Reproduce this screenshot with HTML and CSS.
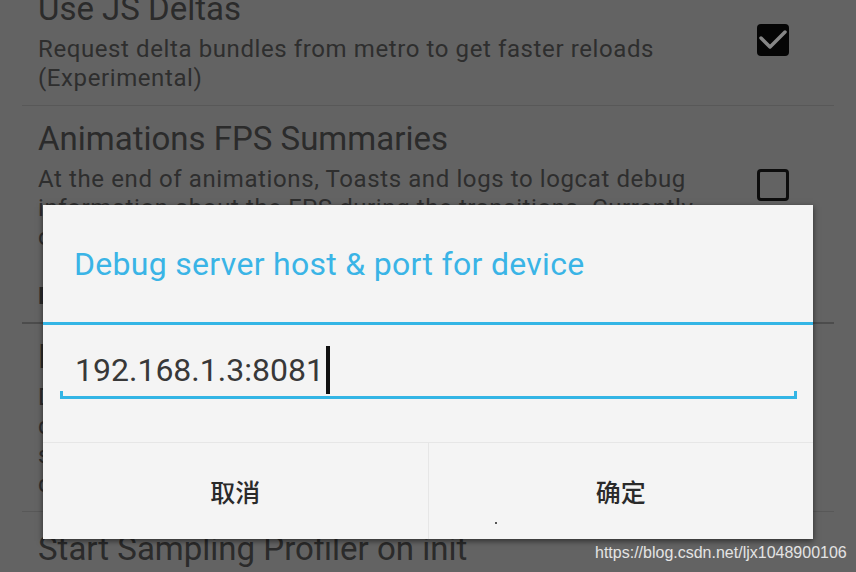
FILE: index.html
```html
<!DOCTYPE html>
<html lang="zh-CN">
<head>
<meta charset="utf-8">
<title>Dev Settings</title>
<link rel="stylesheet" href="styles.css">
</head>
<body>
<main class="prefs">
  <section class="pref">
    <div class="pref-text">
      <div class="pref-title">Use JS Deltas</div>
      <div class="pref-summary">Request delta bundles from metro to get faster reloads (Experimental)</div>
    </div>
    <span class="checkbox checkbox-on">
      <svg viewBox="0 0 32 32" width="32" height="32" aria-hidden="true"><rect x="0" y="0" width="32" height="32" rx="4" fill="#050505"/><polyline points="4,14 13,23 28,8" fill="none" stroke="#868686" stroke-width="3.5" stroke-linecap="round" stroke-linejoin="round"/></svg>
    </span>
  </section>
  <section class="pref pref-divided">
    <div class="pref-text">
      <div class="pref-title">Animations FPS Summaries</div>
      <div class="pref-summary">At the end of animations, Toasts and logs to logcat debug information about the FPS during the transitions. Currently only for Navigator transitions.</div>
    </div>
    <span class="checkbox"></span>
  </section>
  <h2 class="category">Debug server</h2>
  <section class="pref">
    <div class="pref-text">
      <div class="pref-title">Debug server host &amp; port for device</div>
      <div class="pref-summary">Debug server host &amp; port for downloading JS bundle or communicating with JS debugger. With this setting empty launcher should work fine when running on emulator (or genymotion) and connection to debug server running on emulator's localhost.</div>
    </div>
  </section>
  <section class="pref pref-divided pref-profiler">
    <div class="pref-text">
      <div class="pref-title">Start Sampling Profiler on init</div>
    </div>
  </section>
</main>

<div class="dialog" role="dialog">
  <div class="dialog-title">Debug server host &amp; port for device</div>
  <div class="dialog-body">
    <div class="field">
      <span class="field-value">192.168.1.3:8081</span><span class="cursor"></span>
    </div>
  </div>
  <div class="dialog-actions">
    <button class="btn" type="button">取消</button>
    <button class="btn" type="button">确定</button>
  </div>
  <span class="speck"></span>
</div>

<div class="watermark">https://blog.csdn.net/ljx1048900106</div>
</body>
</html>
```

FILE: styles.css
```css
* {
  box-sizing: border-box;
  margin: 0;
  padding: 0;
}

html,
body {
  width: 856px;
  height: 572px;
  overflow: hidden;
}

body {
  position: relative;
  background: #636363;
  color: #2b2b2b;
  font-family: Roboto, "Noto Sans CJK SC", sans-serif;
}

/* background preference list */
.prefs {
  margin: -24px 22px 0;
}

.pref {
  display: flex;
  align-items: center;
  padding: 15px 45px 12px 16px;
}

.pref-divided {
  border-top: 1px solid #585858;
}

.pref-profiler {
  padding-top: 19px;
}

.pref-text {
  flex: 1;
  min-width: 0;
}

.pref-title {
  font-size: 33px;
  line-height: 36px;
  font-weight: 400;
}

.pref-summary {
  margin-top: 8px;
  font-size: 24px;
  line-height: 29px;
  letter-spacing: 0.6px;
  color: #2e2e2e;
}

.category {
  padding: 18px 16px 11px;
  font-size: 24px;
  line-height: 29px;
  font-weight: 700;
  color: #2b2b2b;
  border-bottom: 2px solid #4c4c4c;
}

.checkbox {
  flex: none;
  width: 32px;
  height: 32px;
  margin: 0 0 4px 19px;
  border: 3px solid #0d0d0d;
  border-radius: 4px;
}

.checkbox-on {
  border: none;
}

.checkbox svg {
  display: block;
}

/* dialog */
.dialog {
  position: absolute;
  left: 43px;
  top: 205px;
  width: 770px;
  height: 334px;
  display: flex;
  flex-direction: column;
  background: #f4f4f4;
  box-shadow: 0 2px 6px rgba(0, 0, 0, 0.55);
}

.dialog-title {
  flex: none;
  height: 120px;
  padding: 41px 31px 0;
  font-size: 32px;
  line-height: 36px;
  letter-spacing: 0.3px;
  color: #3ab4e6;
  border-bottom: 3px solid #33b5e5;
}

.dialog-body {
  flex: none;
  height: 118px;
  padding: 19px 16px 0 17px;
  border-bottom: 1px solid #e6e6e6;
}

.field {
  position: relative;
  display: flex;
  align-items: center;
  height: 55px;
  padding-left: 15px;
  border-bottom: 3px solid #33b5e5;
}

.field::before,
.field::after {
  content: "";
  position: absolute;
  bottom: -3px;
  width: 3px;
  height: 8px;
  background: #33b5e5;
}

.field::before {
  left: 0;
}

.field::after {
  right: 0;
}

.field-value {
  font-size: 32px;
  line-height: 40px;
  color: #383838;
}

.cursor {
  width: 4px;
  height: 48px;
  margin-left: 2px;
  background: #111;
}

.dialog-actions {
  flex: 1;
  display: flex;
}

.btn {
  flex: 1;
  display: flex;
  align-items: center;
  justify-content: center;
  background: none;
  border: none;
  font-family: "Noto Sans CJK SC", sans-serif;
  font-size: 25px;
  font-weight: 500;
  color: #2a2a2a;
}

.btn + .btn {
  border-left: 1px solid #e6e6e6;
}

.speck {
  position: absolute;
  left: 452px;
  top: 317px;
  width: 2px;
  height: 2px;
  background: #555;
}

.watermark {
  position: absolute;
  left: 595px;
  top: 544px;
  font-family: "Liberation Sans", Arial, sans-serif;
  font-size: 16px;
  line-height: 18px;
  color: #e4e4e4;
}
```
